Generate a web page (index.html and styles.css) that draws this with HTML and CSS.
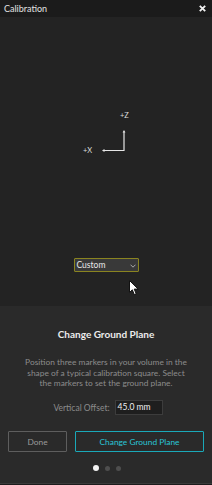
FILE: index.html
```html
<!DOCTYPE html>
<html>
<head>
<meta charset="utf-8">
<link rel="stylesheet" href="styles.css">
</head>
<body>
<div class="window">
  <div class="titlebar">
    <span class="title">Calibration</span>
    <svg class="close" width="7" height="7" viewBox="0 0 7 7"><path d="M0.8 0.8L6.2 6.2M6.2 0.8L0.8 6.2" stroke="#f2f2f2" stroke-width="1.8"/></svg>
  </div>
  <div class="viewport">
    <div class="axes">
      <span class="axis-label z">+Z</span>
      <span class="axis-label x">+X</span>
      <svg class="axis-lines" width="26" height="26" viewBox="0 0 26 26">
        <path d="M22 4.5V23.5H1.5" fill="none" stroke="#e6e6e6" stroke-width="1.2"/>
        <path d="M20.6 5.5L22 3L23.4 5.5Z" fill="#e6e6e6"/>
        <path d="M2.5 22.1L0 23.5L2.5 24.9Z" fill="#e6e6e6"/>
      </svg>
    </div>
    <div class="select">
      <span>Custom</span>
      <svg class="chev" width="6" height="4" viewBox="0 0 6 4"><path d="M0.5 0.7L3 3.2L5.5 0.7" fill="none" stroke="#aaa" stroke-width="1"/></svg>
    </div>
    <svg class="cursor" width="11" height="16" viewBox="0 0 11 16"><path d="M0.5 0.5V12.5L3.3 9.8L5.3 14.6L7.2 13.8L5.2 9.1H9.2Z" fill="#fff" stroke="#111" stroke-width="1"/></svg>
  </div>
  <div class="panel">
    <h1 class="heading">Change Ground Plane</h1>
    <p class="desc">Position three markers in your volume in the shape of a typical calibration square. Select the markers to set the ground plane.</p>
    <div class="offset">
      <span class="offset-label">Vertical Offset:</span>
      <span class="offset-input">45.0 mm</span>
    </div>
    <div class="buttons">
      <button class="btn done">Done</button>
      <button class="btn primary">Change Ground Plane</button>
    </div>
    <div class="dots">
      <span class="dot active"></span>
      <span class="dot"></span>
      <span class="dot"></span>
    </div>
  </div>
</div>
</body>
</html>
```

FILE: styles.css
```css
html, body {
  margin: 0;
  padding: 0;
  background: #1c1c1c;
}
body {
  width: 212px;
  height: 485px;
  overflow: hidden;
  font-family: Lato, "Open Sans", "Liberation Sans", sans-serif;
}
.window {
  width: 212px;
  height: 483px;
  display: flex;
  flex-direction: column;
  border-bottom: 1px solid #3a3a3a;
}
.titlebar {
  height: 17px;
  flex: none;
  background: #1b1b1b;
  display: flex;
  align-items: center;
  justify-content: space-between;
  padding: 0 6px 0 4px;
}
.title {
  color: #e2e2e2;
  font-size: 9px;
}
.viewport {
  position: relative;
  flex: none;
  height: 289px;
  background: #232323;
  display: flex;
  flex-direction: column;
  align-items: center;
}
.axes {
  position: absolute;
  left: 80px;
  top: 93px;
  width: 50px;
  height: 50px;
}
.axis-label {
  position: absolute;
  color: #dcdcdc;
  font-size: 7.5px;
  line-height: 8px;
}
.axis-label.z { left: 40px; top: 2px; }
.axis-label.x { left: 3px; top: 37px; }
.axis-lines {
  position: absolute;
  left: 22px;
  top: 17px;
}
.select {
  margin-top: 241px;
  width: 59px;
  height: 12px;
  border: 1.5px solid #8a8420;
  border-radius: 1px;
  background: #393939;
  display: flex;
  align-items: center;
  justify-content: space-between;
  padding: 0 2px 0 2px;
}
.select span {
  color: #e8e8e8;
  font-size: 8.5px;
  line-height: 12px;
}
.chev { margin-top: 1px; }
.cursor {
  position: absolute;
  left: 129px;
  top: 263px;
}
.panel {
  flex: 1;
  background: #2a2a2a;
  display: flex;
  flex-direction: column;
  align-items: center;
}
.heading {
  margin: 20px 0 0 0;
  font-size: 10px;
  font-weight: 700;
  color: #ececec;
  line-height: 16px;
}
.desc {
  margin: 15px 0 0 0;
  width: 166px;
  text-align: center;
  color: #8c8c8c;
  font-size: 8.4px;
  line-height: 10.7px;
}
.offset {
  margin-top: 11px;
  display: flex;
  align-items: center;
  gap: 5px;
  margin-left: 4px;
}
.offset-label {
  color: #8c8c8c;
  font-size: 8.5px;
}
.offset-input {
  width: 44px;
  height: 13px;
  background: #1e1e1e;
  border: 1px solid #3c3c3c;
  color: #f0f0f0;
  font-size: 8.5px;
  line-height: 13px;
  padding-left: 2px;
}
.buttons {
  align-self: stretch;
  margin: 16px 8px 0 8px;
  display: flex;
  gap: 8px;
}
.btn {
  height: 21px;
  background: transparent;
  font-family: inherit;
  font-size: 8.4px;
  padding: 0;
  border-radius: 1px;
}
.btn.done {
  width: 59px;
  border: 1px solid #5e5e5e;
  color: #9a9a9a;
}
.btn.primary {
  flex: 1;
  border: 1px solid #1aa9b9;
  color: #29c6d6;
}
.dots {
  margin-top: 13px;
  display: flex;
  gap: 6px;
  align-items: center;
  margin-left: 1px;
}
.dot {
  width: 5px;
  height: 5px;
  border-radius: 50%;
  background: #4e4e4e;
}
.dot.active {
  width: 6px;
  height: 6px;
  background: #f4f4f4;
}
```
